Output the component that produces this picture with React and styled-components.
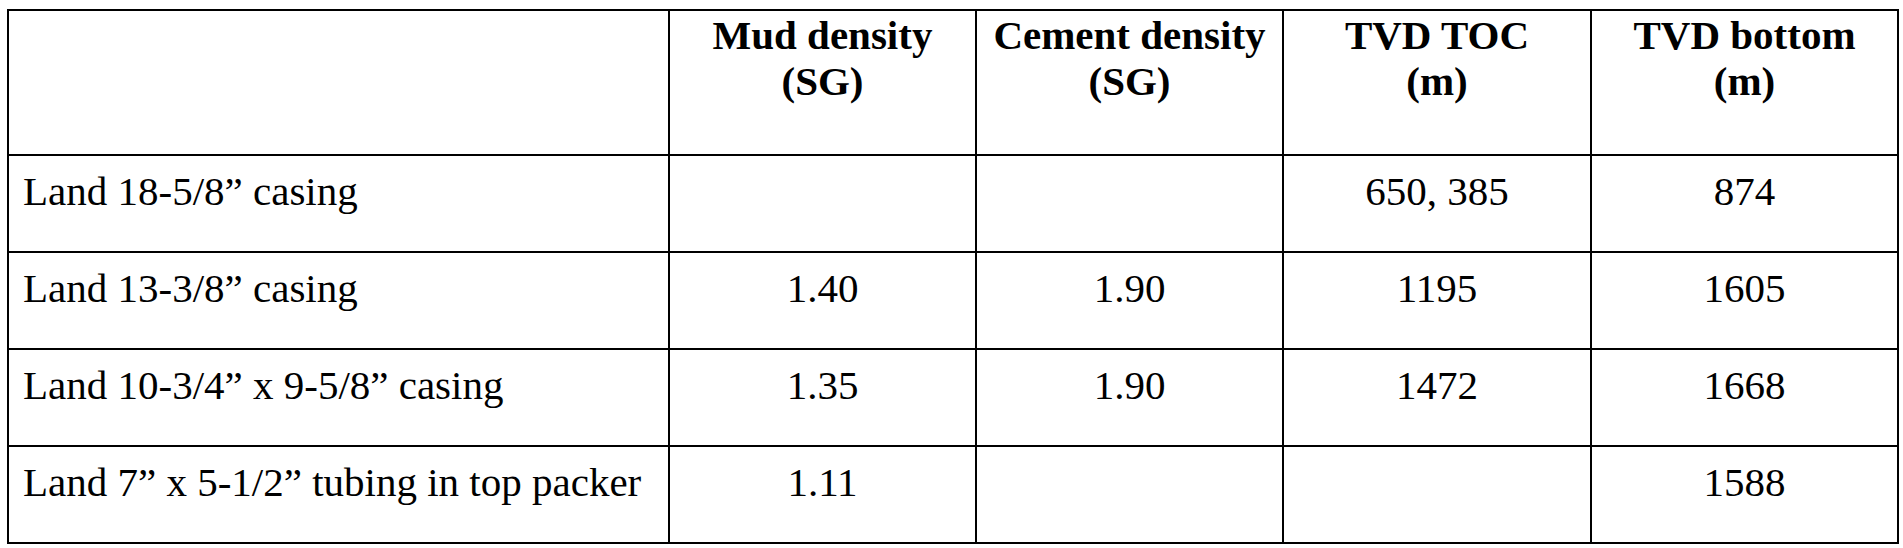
import React from 'react';
import styled, { createGlobalStyle } from 'styled-components';

const GlobalStyle = createGlobalStyle`
  html, body {
    margin: 0;
    padding: 0;
    background: #fff;
  }
`;

const serif = `"Liberation Serif", "Times New Roman", Times, serif`;

const Page = styled.div`
  padding: 9px 0 0 7px;
  font-family: ${serif};
  color: #000;
`;

const Table = styled.table`
  border-collapse: collapse;
  table-layout: fixed;
  width: 1890px;
  font-family: ${serif};
`;

const Col = styled.col`
  width: ${(p) => p.$w}px;
`;

const HeadCell = styled.th`
  border: 2px solid #000;
  height: 142px;
  padding: 1px 4px 0;
  vertical-align: top;
  text-align: center;
  font-family: ${serif};
  font-size: 41px;
  line-height: 46px;
  font-weight: bold;
`;

const Cell = styled.td`
  border: 2px solid #000;
  height: 83px;
  padding: 12px 6px 0 ${(p) => (p.$label ? 14 : 6)}px;
  vertical-align: top;
  text-align: ${(p) => (p.$label ? 'left' : 'center')};
  font-family: ${serif};
  font-size: 41px;
  line-height: 46px;
  white-space: nowrap;
`;

const columns = [
  { w: 661, title: '' },
  { w: 307, title: 'Mud density', unit: '(SG)' },
  { w: 307, title: 'Cement density', unit: '(SG)' },
  { w: 308, title: 'TVD TOC', unit: '(m)' },
  { w: 307, title: 'TVD bottom', unit: '(m)' },
];

const rows = [
  ['Land 18-5/8\u201d casing', '', '', '650, 385', '874'],
  ['Land 13-3/8\u201d casing', '1.40', '1.90', '1195', '1605'],
  ['Land 10-3/4\u201d x 9-5/8\u201d casing', '1.35', '1.90', '1472', '1668'],
  ['Land 7\u201d x 5-1/2\u201d tubing in top packer', '1.11', '', '', '1588'],
];

export default function App() {
  return (
    <Page>
      <GlobalStyle />
      <Table>
        <colgroup>
          {columns.map((c, i) => (
            <Col key={i} $w={c.w} />
          ))}
        </colgroup>
        <thead>
          <tr>
            {columns.map((c, i) => (
              <HeadCell key={i}>
                {c.title}
                {c.unit && <br />}
                {c.unit}
              </HeadCell>
            ))}
          </tr>
        </thead>
        <tbody>
          {rows.map((r, i) => (
            <tr key={i}>
              {r.map((v, j) => (
                <Cell key={j} $label={j === 0}>
                  {v}
                </Cell>
              ))}
            </tr>
          ))}
        </tbody>
      </Table>
    </Page>
  );
}
